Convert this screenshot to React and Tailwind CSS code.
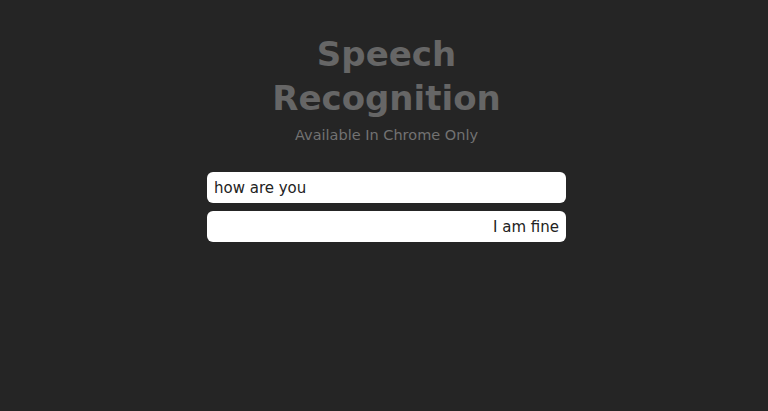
import React from 'react';

const font = { fontFamily: '"DejaVu Sans", "Open Sans", sans-serif' };

export default function App() {
  return (
    <div className="min-h-[411px] w-full bg-[#252525] flex flex-col items-center pt-[32px] pl-[5px]" style={font}>
      <h1 className="text-[34px] leading-[44px] font-bold text-[#666666] text-center w-[260px]">
        Speech Recognition
      </h1>
      <p className="mt-[5px] text-[14.5px] leading-[20px] text-[#727272]">Available In Chrome Only</p>
      <div className="mt-[27px] w-[359px] flex flex-col gap-[8px]">
        <div className="h-[31px] bg-white rounded-[6px] px-[7px] pt-[1px] flex items-center text-[15px] text-[#222]">
          how are you
        </div>
        <div className="h-[31px] bg-white rounded-[6px] px-[7px] pt-[1px] flex items-center justify-end text-[15px] text-[#222]">
          I am fine
        </div>
      </div>
    </div>
  );
}
